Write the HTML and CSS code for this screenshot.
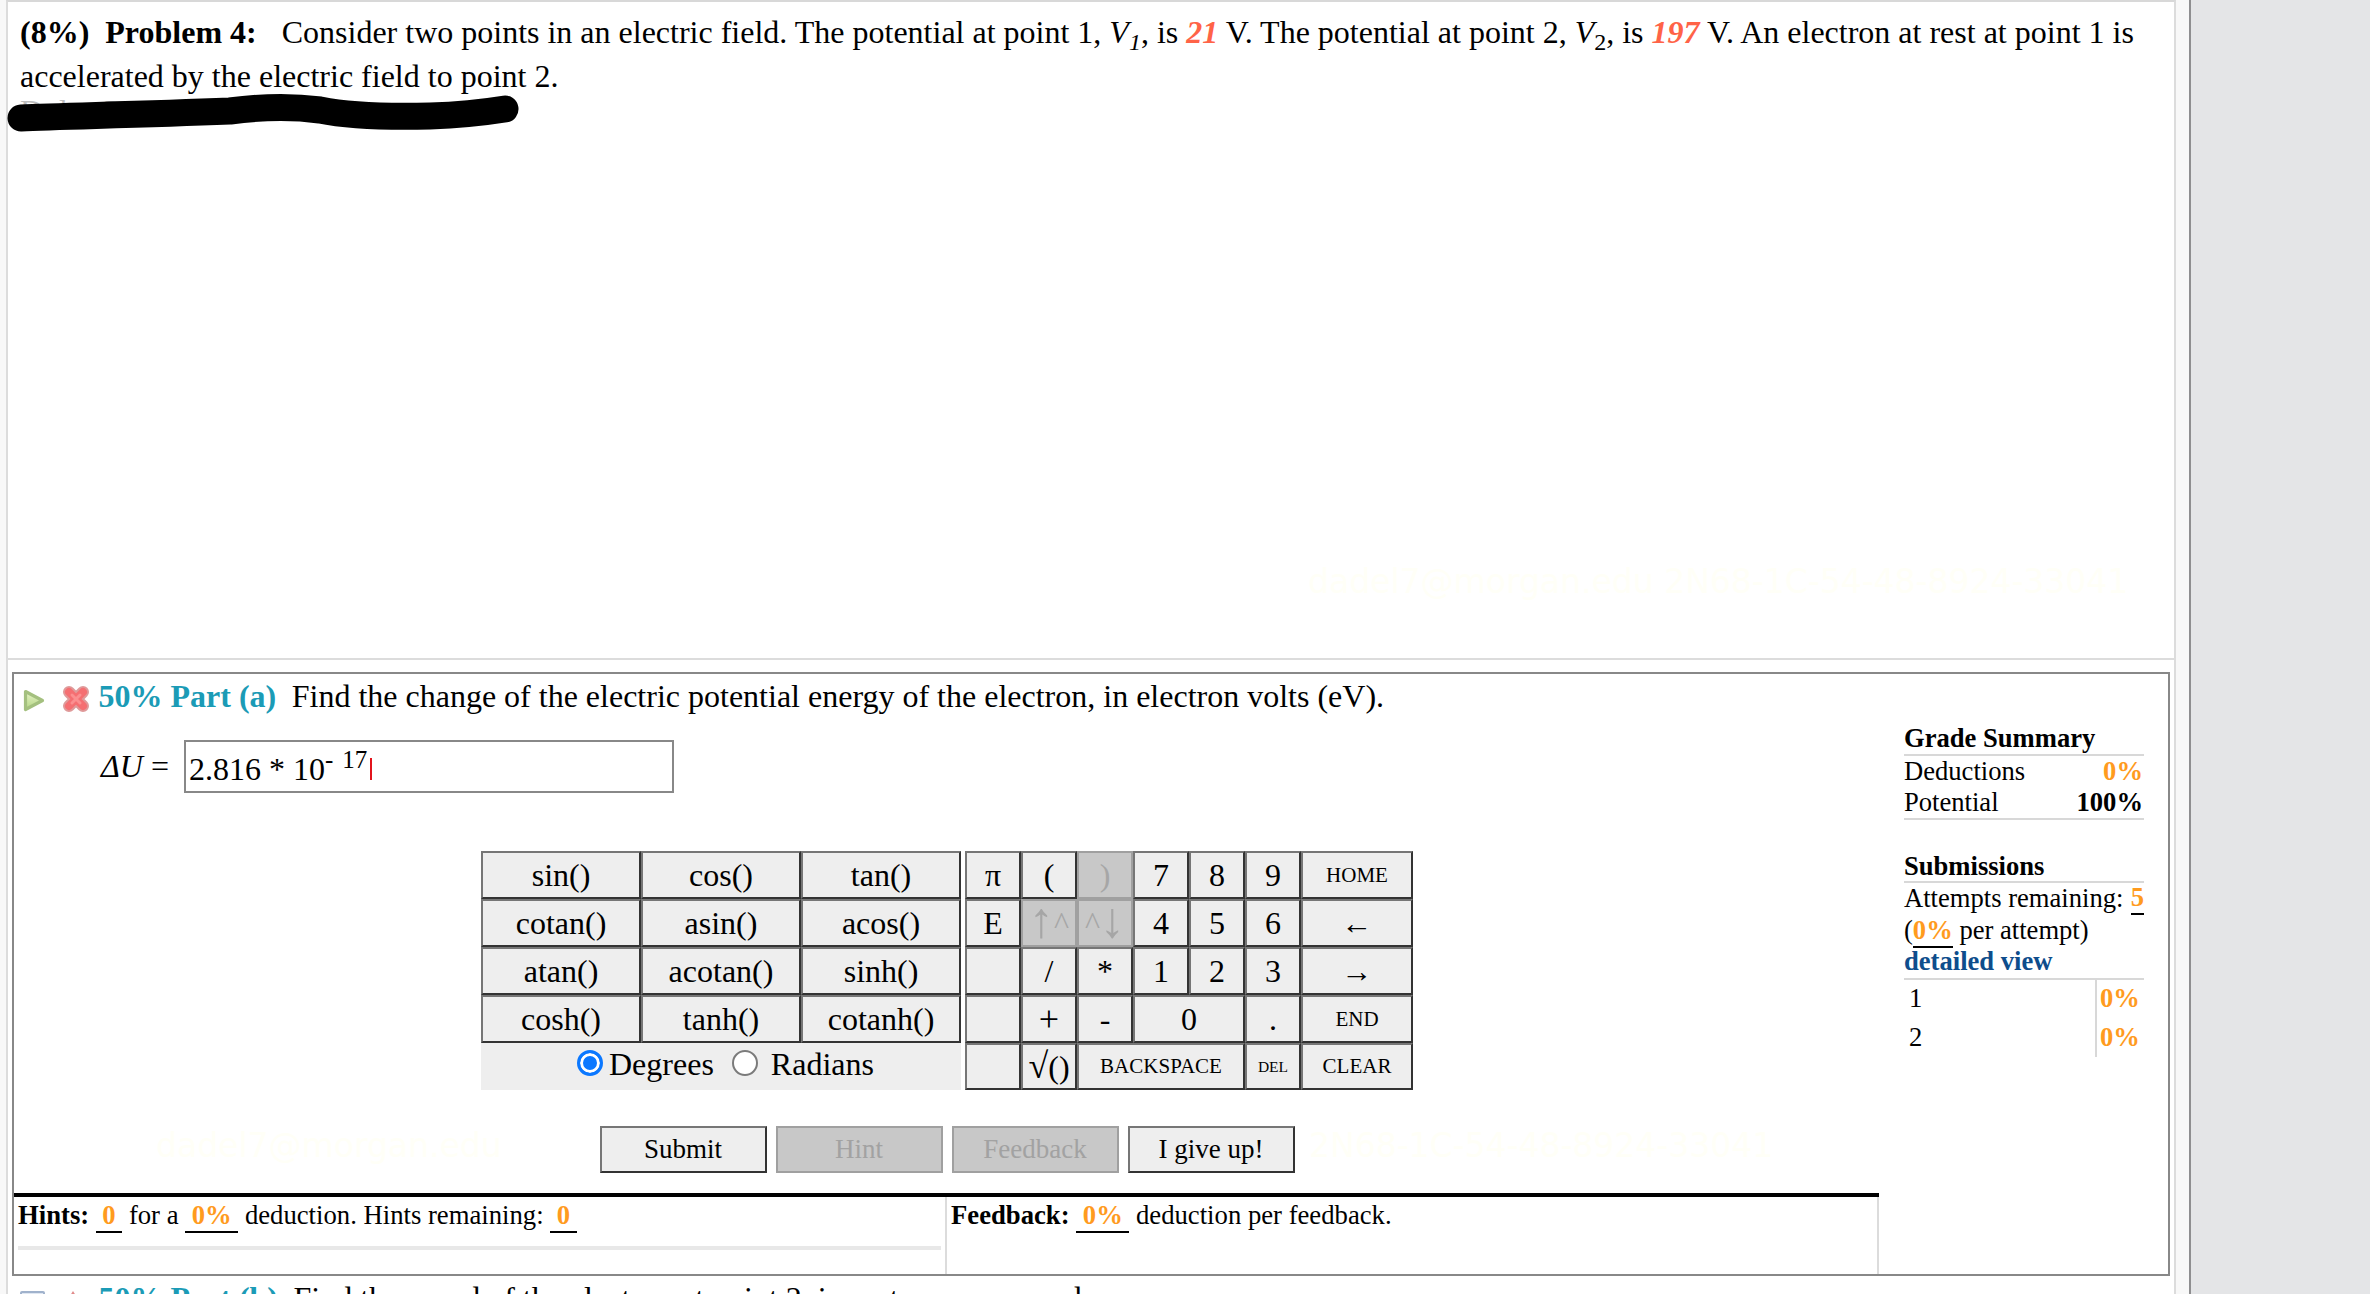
FILE: index.html
```html
<!DOCTYPE html>
<html lang="en">
<head>
<meta charset="utf-8">
<title>Problem 4</title>
<link rel="stylesheet" href="styles.css">
</head>
<body>
<div class="page">
  <main class="workspace">
    <div class="sheet">
      <section class="problem">
        <p class="statement"><b>(8%)</b>&nbsp;&nbsp;<b class="problem-name">Problem 4:</b>Consider two points in an electric field. The potential at point 1, <i>V<sub>1</sub></i>, is <b class="given">21</b> V. The potential at point 2, <i>V</i><sub>2</sub>, is <b class="given">197</b> V. An electron at rest at point 1 is<br>accelerated by the electric field to point 2.</p>
        <p class="hidden-note">D l&nbsp;&nbsp;S</p>
        <svg class="scribble" width="530" height="50" viewBox="0 0 530 50" aria-hidden="true">
          <path d="M21 28 C60 26 130 25 230 21 C260 17 290 16 320 20 C350 26 390 27 430 26 C460 25 480 23 505 19" fill="none" stroke="#000" stroke-width="27" stroke-linecap="round"/>
        </svg>
      </section>
      <div class="parts">
        <section class="part">
          <div class="part-main">
            <header class="part-head">
              <svg class="icon-play" width="22" height="23" viewBox="0 0 22 23" aria-hidden="true">
                <defs><linearGradient id="playFill" x1="0" y1="0" x2="0" y2="1"><stop offset="0" stop-color="#e6f3c6"/><stop offset="1" stop-color="#b5d685"/></linearGradient></defs>
                <path d="M2.5 2.5 L19.5 11.5 L2.5 20.5 Z" fill="url(#playFill)" stroke="#a4c07f" stroke-width="3.2" stroke-linejoin="round"/>
              </svg>
              <svg class="icon-wrong" width="28" height="28" viewBox="0 0 28 28" aria-hidden="true">
                <path d="M7 7 L21 21 M21 7 L7 21" stroke="#df9a9a" stroke-width="12" stroke-linecap="round"/>
                <path d="M7 7 L21 21 M21 7 L7 21" stroke="#f56f72" stroke-width="8" stroke-linecap="round"/>
                <path d="M10 10 L18 18 M18 10 L10 18" stroke="#fb8f90" stroke-width="3" stroke-linecap="round"/>
              </svg>
              <b class="part-title">50% Part (a)</b>
              <span class="part-text">Find the change of the electric potential energy of the electron, in electron volts (eV).</span>
            </header>
            <div class="answer">
              <span class="answer-label"><i>ΔU</i> =</span>
              <div class="answer-box">2.816 * 10<span class="power">-</span><span class="power power-value">17</span><span class="caret"></span></div>
            </div>
            <div class="keypad">
              <div class="keys-functions">
                <button class="key" type="button">sin()</button>
                <button class="key" type="button">cos()</button>
                <button class="key" type="button">tan()</button>
                <button class="key" type="button">cotan()</button>
                <button class="key" type="button">asin()</button>
                <button class="key" type="button">acos()</button>
                <button class="key" type="button">atan()</button>
                <button class="key" type="button">acotan()</button>
                <button class="key" type="button">sinh()</button>
                <button class="key" type="button">cosh()</button>
                <button class="key" type="button">tanh()</button>
                <button class="key" type="button">cotanh()</button>
                <div class="units">
                  <input class="radio" type="radio" name="unit" checked aria-label="Degrees"><span class="unit-first">Degrees</span>
                  <input class="radio radio-second" type="radio" name="unit" aria-label="Radians"><span class="unit-second">Radians</span>
                </div>
              </div>
              <div class="keys-numbers">
                <button class="key" type="button">π</button>
                <button class="key" type="button">(</button>
                <button class="key off" type="button">)</button>
                <button class="key" type="button">7</button>
                <button class="key" type="button">8</button>
                <button class="key" type="button">9</button>
                <button class="key small" type="button">HOME</button>
                <button class="key" type="button">E</button>
                <button class="key off" type="button"><span class="tall-arrow">↑</span>^</button>
                <button class="key off" type="button">^<span class="tall-arrow">↓</span></button>
                <button class="key" type="button">4</button>
                <button class="key" type="button">5</button>
                <button class="key" type="button">6</button>
                <button class="key arrow" type="button">←</button>
                <button class="key" type="button" aria-label="blank"></button>
                <button class="key" type="button">/</button>
                <button class="key" type="button">*</button>
                <button class="key" type="button">1</button>
                <button class="key" type="button">2</button>
                <button class="key" type="button">3</button>
                <button class="key arrow" type="button">→</button>
                <button class="key" type="button" aria-label="blank"></button>
                <button class="key plus" type="button">+</button>
                <button class="key" type="button">-</button>
                <button class="key span-2" type="button">0</button>
                <button class="key" type="button">.</button>
                <button class="key small" type="button">END</button>
                <button class="key" type="button" aria-label="blank"></button>
                <button class="key" type="button"><span class="root">√</span>()</button>
                <button class="key small span-3" type="button">BACKSPACE</button>
                <button class="key tiny" type="button">DEL</button>
                <button class="key small" type="button">CLEAR</button>
              </div>
            </div>
            <div class="actions">
              <button class="action" type="button">Submit</button>
              <button class="action off" type="button">Hint</button>
              <button class="action off" type="button">Feedback</button>
              <button class="action" type="button">I give up!</button>
            </div>
            <div class="help">
              <div class="help-hints">
                <div class="help-line"><b>Hints:</b> <b class="score">0</b> for a <b class="score">0%</b> deduction. Hints remaining: <b class="score">0</b></div>
                <div class="help-rule"></div>
              </div>
              <div class="help-feedback">
                <div class="help-line"><b>Feedback:</b> <b class="score">0%</b> deduction per feedback.</div>
              </div>
            </div>
          </div>
          <aside class="summary">
            <h3 class="summary-title">Grade Summary</h3>
            <div class="summary-group">
              <div class="summary-row"><span>Deductions</span><b class="orange">0%</b></div>
              <div class="summary-row"><span>Potential</span><b>100%</b></div>
            </div>
            <h3 class="summary-title summary-title-next">Submissions</h3>
            <div class="summary-group summary-attempts">
              <div class="summary-line summary-attempts-line"><span>Attempts remaining:</span><b class="orange mark">5</b></div>
              <div class="summary-line">(<b class="orange mark">0%</b> per attempt)</div>
              <div class="summary-line"><a class="detail" href="#">detailed view</a></div>
            </div>
            <div class="tries">
              <span class="try-num">1</span><b class="try-score orange">0%</b>
              <span class="try-num">2</span><b class="try-score orange">0%</b>
            </div>
          </aside>
        </section>
        <header class="part-head part-next">
          <svg class="icon-box" width="25" height="21" viewBox="0 0 25 21" aria-hidden="true"><rect x="1" y="1" width="23" height="19" rx="1" fill="#dfe7f2" stroke="#a0b2cc" stroke-width="2"/></svg>
          <svg class="icon-up" width="10" height="12" viewBox="0 0 10 12" aria-hidden="true"><path d="M5 0 L10 8 L0 8 Z" fill="#e08a8a"/></svg>
          <b class="part-title">50% Part (b)</b>
          <span class="part-text">Find the speed of the electron at point 2, in meters per second.</span>
        </header>
      </div>
    </div>
    <span class="stamp stamp-a">dadel7@morgan.edu 2N68-1C-54-48-8924-33041</span>
    <span class="stamp stamp-b">dadel7@morgan.edu</span>
    <span class="stamp stamp-c">2N68-1C-54-48-8924-33041</span>
  </main>
  <div class="rail"></div>
</div>
</body>
</html>
```

FILE: styles.css
```css
* { box-sizing: border-box; }
html, body { margin: 0; padding: 0; }
body {
  width: 2370px;
  height: 1294px;
  overflow: hidden;
  background: #e4e5e7;
  color: #000;
  font-family: "Liberation Serif", "Times New Roman", serif;
  font-size: 32px;
  line-height: 44px;
}
.page { display: flex; height: 1294px; overflow: hidden; }
.workspace {
  position: relative;
  width: 2191px;
  height: 1294px;
  flex: none;
  padding-left: 6px;
  background: #f8f8f8;
  border-right: 2px solid #8e8e90;
  overflow: hidden;
}
.rail { flex: 1; background: #e4e5e7; }

.sheet {
  width: 2170px;
  height: 1294px;
  background: #fff;
  border-top: 2px solid #d8d8d8;
  border-left: 2px solid #dcdcdc;
  border-right: 2px solid #dcdcdc;
}

.problem {
  position: relative;
  height: 658px;
  padding: 8px 12px 0 12px;
  border-bottom: 2px solid #dcdcdc;
}
.statement { margin: 0; white-space: nowrap; }
.problem-name { margin-right: 25px; }
.statement sub { font-size: 24px; line-height: 0; vertical-align: -7px; }
.given { color: #ff6347; font-style: italic; }
.hidden-note { margin: -2px 0 0; color: #bdbdbd; font-size: 32px; line-height: 30px; word-spacing: 8px; }
.scribble { position: absolute; left: -8.5px; top: 88px; }

.parts { padding: 12px 4px 0 4px; }
.part {
  display: flex;
  height: 604px;
  border: 2px solid #888;
}
.part-main { display: flex; flex-direction: column; width: 1865px; flex: none; }

.part-head { display: flex; align-items: flex-start; height: 44px; padding-left: 9px; white-space: nowrap; }
.icon-play { margin-top: 15px; flex: none; }
.icon-wrong { margin: 11px 0 0 17px; flex: none; }
.part-title { margin-left: 8.5px; color: #1b9bb6; }
.part-text { margin-left: 15.5px; }
.part-next { padding-left: 8px; }
.icon-box { margin-top: 15px; flex: none; }
.icon-up { margin: 15px 0 0 23px; flex: none; }
.part-next .part-title { margin-left: 20.5px; }

.answer { display: flex; align-items: center; margin-top: 22px; padding-left: 87px; }
.answer-label { padding-bottom: 2px; margin-right: 15px; white-space: nowrap; }
.answer-box {
  width: 490px;
  height: 53px;
  padding: 5px 0 0 3px;
  border: 2px solid #888;
  white-space: nowrap;
}
.power { font-size: 25px; line-height: 0; vertical-align: 12px; }
.power-value { margin-left: 9px; }
.caret { display: inline-block; width: 2px; height: 22px; margin-left: 3px; background: #e2141c; }

.keypad { display: flex; gap: 4px; margin-top: 58px; padding-left: 467px; }
.keys-functions { display: grid; grid-template-columns: repeat(3, 160px); grid-template-rows: repeat(4, 48px) 47px; }
.keys-numbers { display: grid; grid-template-columns: repeat(6, 56px) 112px; grid-template-rows: repeat(4, 48px) 47px; }
.key {
  margin: 0;
  padding: 0;
  background: #eee;
  color: #000;
  font-family: inherit;
  font-size: 32px;
  line-height: 1;
  white-space: nowrap;
  border: 2px solid;
  border-color: #767676 #333 #333 #767676;
}
.key.small { font-size: 21px; }
.key.arrow { font-size: 31px; }
.key.tiny { font-size: 15.5px; }
.key.plus { font-size: 36px; }
.key.off { background: #c8c8c8; color: #a6a6a6; border-color: #a0a0a0; }
.tall-arrow { font-size: 50px; line-height: 0; vertical-align: -3px; }
.root { font-size: 36px; line-height: 0; }
.span-2 { grid-column: span 2; }
.span-3 { grid-column: span 3; }
.units {
  grid-column: 1 / -1;
  display: flex;
  align-items: center;
  padding: 0 0 5px 96px;
  background: #eee;
}
.radio {
  appearance: none;
  width: 26px;
  height: 26px;
  margin: 0 0 2px 0;
  flex: none;
  border-radius: 50%;
  background: #fff;
  border: 2px solid #7b7b7b;
}
.radio:checked { background: #0b78ff; border: 3px solid #0b78ff; box-shadow: inset 0 0 0 3px #fff; }
.unit-first { margin-left: 6px; }
.radio-second { margin-left: 18px; }
.unit-second { margin-left: 13px; }

.actions { display: flex; gap: 9px; margin-top: 36px; padding-left: 585.5px; }
.action {
  width: 167px;
  height: 47px;
  margin: 0;
  padding: 0;
  background: #eee;
  color: #000;
  font-family: inherit;
  font-size: 27px;
  border: 2px solid;
  border-color: #767676 #333 #333 #767676;
}
.action.off { background: #c8c8c8; color: #a2a2a2; border-color: #a0a0a0; }

.help {
  flex: 1;
  display: flex;
  margin-top: 20px;
  border-top: 4px solid #000;
  font-size: 26.7px;
  line-height: 37px;
}
.help-hints { width: 931px; padding: 0 4px; }
.help-feedback { flex: 1; padding-left: 4px; border-left: 2px solid #dcdcdc; border-right: 2px solid #dcdcdc; }
.help-rule { height: 4px; margin-top: 12px; background: #e8e8e8; }
.score { padding: 0 6.5px 1px; color: #ff9b1e; border-bottom: 2px solid #000; }

.summary { width: 240px; margin-left: 25px; padding-top: 49px; font-size: 26.6px; line-height: 31px; flex: none; }
.summary-title {
  margin: 0;
  font-size: 26.6px;
  line-height: 30px;
  font-weight: bold;
  padding-bottom: 1px;
  border-bottom: 2px solid #d8d8d8;
}
.summary-title-next { margin-top: 31px; padding-bottom: 0; }
.summary-row { display: flex; justify-content: space-between; padding-right: 1px; }
.summary-group { border-bottom: 2px solid #d8d8d8; }
.summary-attempts { padding-bottom: 1px; }
.summary-attempts-line { display: flex; justify-content: space-between; }
.orange { color: #ff9b1e; }
.mark { padding-bottom: 1px; border-bottom: 2px solid #000; }
.summary-attempts-line .mark { line-height: 28px; height: 32px; }
.detail { color: #0e4d8c; font-weight: bold; text-decoration: none; }
.tries { display: grid; grid-template-columns: 193px 47px; margin-top: -1px; line-height: 39px; }
.try-num { padding-left: 5px; border-right: 2px solid #d8d8d8; }
.try-score { padding-left: 3px; }

.stamp {
  position: absolute;
  font-family: "DejaVu Sans", sans-serif;
  font-size: 33px;
  line-height: 40px;
  color: #fffff7;
  white-space: nowrap;
  pointer-events: none;
}
.stamp-a { left: 1308px; top: 562px; }
.stamp-b { left: 156px; top: 1126px; }
.stamp-c { left: 1309px; top: 1126px; }
```
